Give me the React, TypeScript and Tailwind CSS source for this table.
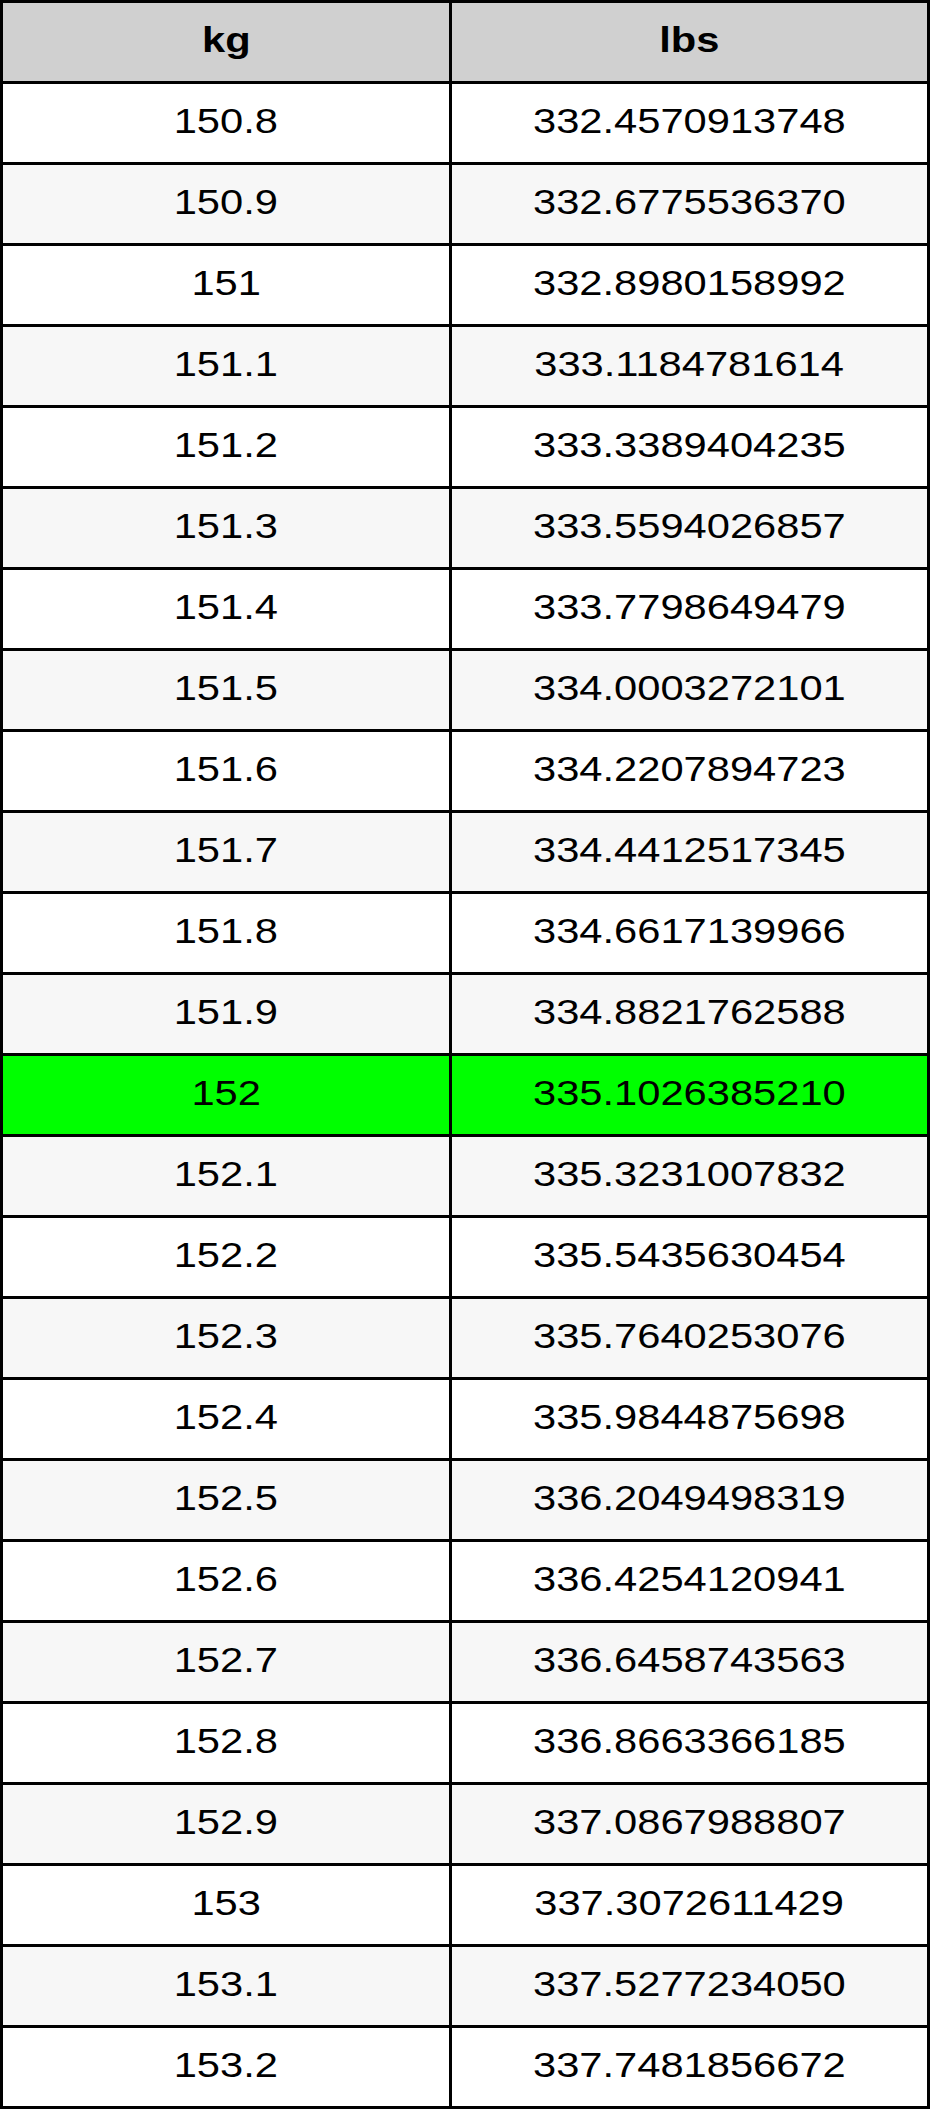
import React from 'react';

const rows: [string, string][] = [
  ['150.8', '332.4570913748'],
  ['150.9', '332.6775536370'],
  ['151', '332.8980158992'],
  ['151.1', '333.1184781614'],
  ['151.2', '333.3389404235'],
  ['151.3', '333.5594026857'],
  ['151.4', '333.7798649479'],
  ['151.5', '334.0003272101'],
  ['151.6', '334.2207894723'],
  ['151.7', '334.4412517345'],
  ['151.8', '334.6617139966'],
  ['151.9', '334.8821762588'],
  ['152', '335.1026385210'],
  ['152.1', '335.3231007832'],
  ['152.2', '335.5435630454'],
  ['152.3', '335.7640253076'],
  ['152.4', '335.9844875698'],
  ['152.5', '336.2049498319'],
  ['152.6', '336.4254120941'],
  ['152.7', '336.6458743563'],
  ['152.8', '336.8663366185'],
  ['152.9', '337.0867988807'],
  ['153', '337.3072611429'],
  ['153.1', '337.5277234050'],
  ['153.2', '337.7481856672'],
];

// glyphs in the table are wider than plain Arial, so stretch them a bit
const Cell: React.FC<{ wide?: boolean; children: React.ReactNode }> = ({ wide, children }) => (
  <div
    className={`flex ${wide ? 'flex-1' : 'w-[449px]'} items-center justify-center border-b-[3px] border-r-[3px] border-black pb-[4px]`}
  >
    <span className="inline-block scale-x-[1.19]">{children}</span>
  </div>
);

const App: React.FC = () => {
  return (
    <div className="w-[930px] bg-white" style={{ fontFamily: '"Liberation Sans", Arial, sans-serif' }}>
      <div className="flex flex-col border-l-[3px] border-t-[3px] border-black text-[35px] text-black">
        <div className="flex h-[81px] bg-[#d0d0d0] font-bold">
          <Cell>kg</Cell>
          <Cell wide>lbs</Cell>
        </div>
        {rows.map(([kg, lbs], i) => {
          const bg = kg === '152' ? 'bg-[#00ff00]' : i % 2 === 1 ? 'bg-[#f7f7f7]' : 'bg-white';
          return (
            <div key={kg} className={`flex h-[81px] ${bg}`}>
              <Cell>{kg}</Cell>
              <Cell wide>{lbs}</Cell>
            </div>
          );
        })}
      </div>
    </div>
  );
};

export default App;
